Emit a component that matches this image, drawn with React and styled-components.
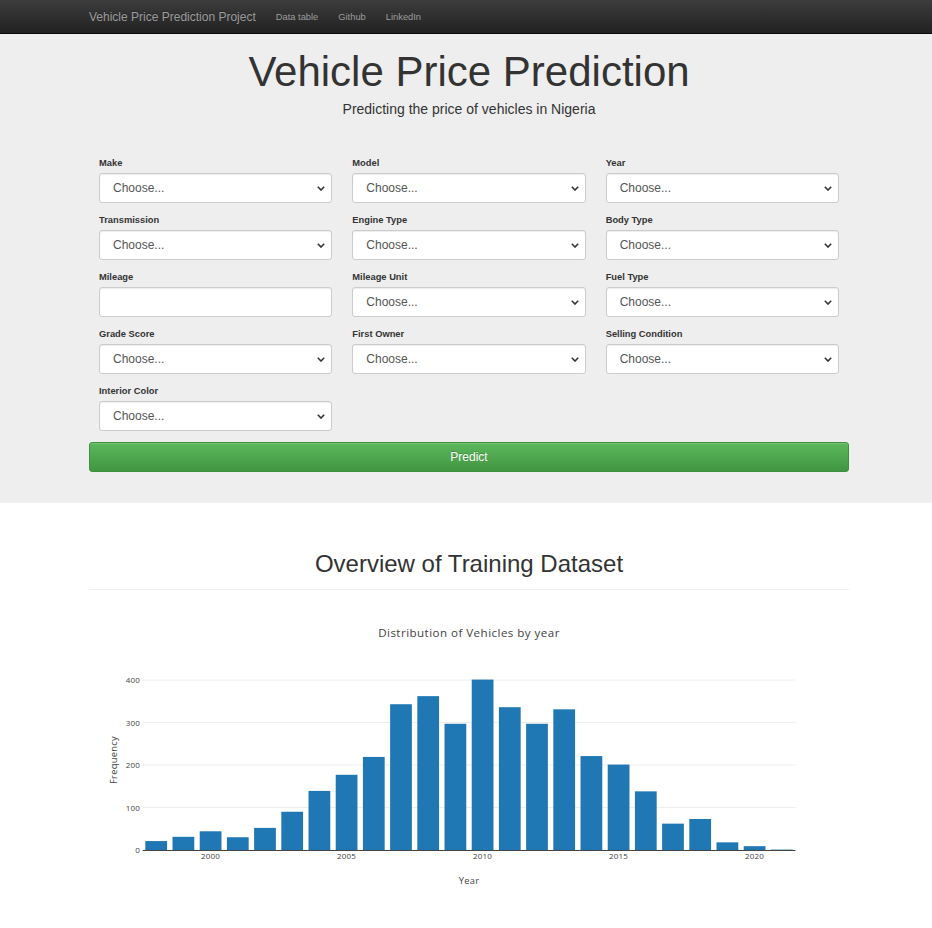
import React from "react";
import styled, { createGlobalStyle } from "styled-components";

const GlobalStyle = createGlobalStyle`
  html, body { margin: 0; padding: 0; background: #fff; }
  body {
    font-family: "Liberation Sans", Arial, Helvetica, sans-serif;
    color: #333;
  }
  * { box-sizing: border-box; }
`;

const Container = styled.div`
  width: 760px;
  margin-left: calc(50% - 377px);
`;

const Navbar = styled.nav`
  height: 34px;
  background: linear-gradient(to bottom, #3c3c3c 0%, #222 100%);
  border-bottom: 1px solid #080808;
`;

const NavInner = styled(Container)`
  display: flex;
  align-items: center;
  height: 33px;
`;

const Brand = styled.a`
  font-size: 12px;
  color: #9d9d9d;
  text-decoration: none;
  padding-right: 10px;
  text-shadow: 0 -1px 0 rgba(0, 0, 0, 0.25);
`;

const NavLink = styled.a`
  font-size: 9.33px;
  color: #9d9d9d;
  text-decoration: none;
  padding: 0 10px;
`;

const Jumbotron = styled.header`
  background: #eee;
  padding: 15px 0 31px;
`;

const Title = styled.h1`
  margin: 0;
  font-size: 42px;
  line-height: 46px;
  font-weight: 500;
  text-align: center;
  color: #333;
`;

const Lead = styled.p`
  margin: 3.5px 0 0;
  font-size: 14px;
  line-height: 20px;
  text-align: center;
`;

const FormGrid = styled.div`
  margin-top: 38.3px;
  display: grid;
  grid-template-columns: repeat(3, 1fr);
  column-gap: 20px;
  padding: 0 10px;
`;

const Field = styled.div`
  margin-bottom: 10.4px;
`;

const Label = styled.label`
  display: block;
  font-size: 9.33px;
  line-height: 13.3px;
  font-weight: 700;
  margin-bottom: 3.3px;
  color: #333;
`;

const SelectWrap = styled.div`
  position: relative;
`;

const controlStyles = `
  display: block;
  width: 100%;
  height: 30px;
  border: 1px solid #ccc;
  border-radius: 3px;
  background: #fff;
  box-shadow: inset 0 1px 1px rgba(0, 0, 0, 0.075);
  font-family: "Liberation Sans", Arial, sans-serif;
  font-size: 12px;
  color: #555;
  outline: none;
`;

const Select = styled.select`
  ${controlStyles}
  appearance: none;
  -webkit-appearance: none;
  padding: 0 24px 0 13px;
`;

const TextInput = styled.input`
  ${controlStyles}
  padding: 0 13px;
`;

const Chevron = styled.svg`
  position: absolute;
  right: 7px;
  top: 50%;
  margin-top: -2.5px;
  pointer-events: none;
`;

const PredictButton = styled.button`
  display: block;
  width: 100%;
  height: 30px;
  margin-top: 0.6px;
  border: 1px solid #3e8f3e;
  border-radius: 3px;
  background: linear-gradient(to bottom, #5cb85c 0%, #419641 100%);
  color: #fff;
  font-family: "Liberation Sans", Arial, sans-serif;
  font-size: 12px;
  text-shadow: 0 -1px 0 rgba(0, 0, 0, 0.2);
  box-shadow: inset 0 1px 0 rgba(255, 255, 255, 0.15);
`;

const SectionTitle = styled.h2`
  margin: 47.5px 0 0;
  font-size: 24px;
  line-height: 26px;
  font-weight: 500;
  text-align: center;
  color: #333;
`;

const Rule = styled.hr`
  margin: 12.5px 0 0;
  border: 0;
  border-top: 1px solid #eee;
`;

const ChartWrap = styled.div`
  margin-top: 13.5px;
  height: 300px;
  margin-bottom: 24px;
`;

const ChartSvg = styled.svg`
  display: block;
  font-family: "Open Sans", Verdana, Arial, sans-serif;
`;

const fields = [
  { label: "Make" },
  { label: "Model" },
  { label: "Year" },
  { label: "Transmission" },
  { label: "Engine Type" },
  { label: "Body Type" },
  { label: "Mileage", input: true },
  { label: "Mileage Unit" },
  { label: "Fuel Type" },
  { label: "Grade Score" },
  { label: "First Owner" },
  { label: "Selling Condition" },
  { label: "Interior Color" },
];

const data = [
  [1998, 21], [1999, 31], [2000, 44], [2001, 30], [2002, 52], [2003, 90],
  [2004, 139], [2005, 177], [2006, 219], [2007, 343], [2008, 362], [2009, 297],
  [2010, 401], [2011, 336], [2012, 297], [2013, 331], [2014, 221], [2015, 201],
  [2016, 138], [2017, 62], [2018, 73], [2019, 18], [2020, 9], [2021, 1],
];

const PL = 53.6;
const PR = 706.4;
const Y0 = 246;
const KX = 27.2;
const KY = 0.425;
const xOf = (yr) => PL + (yr - 1997.5) * KX;
const yOf = (v) => Y0 - v * KY;

function Chart() {
  return (
    <ChartSvg width="760" height="300" viewBox="0 0 760 300">
      <text x="380" y="32.5" textAnchor="middle" fontSize="11.6" letterSpacing="0.45" fill="#444">
        Distribution of Vehicles by year
      </text>
      {[100, 200, 300, 400].map((v) => (
        <line key={v} x1={PL} x2={PR} y1={yOf(v)} y2={yOf(v)} stroke="#eee" strokeWidth="1" />
      ))}
      {data.map(([yr, v]) => (
        <rect
          key={yr}
          x={xOf(yr) - KX * 0.4}
          width={KX * 0.8}
          y={yOf(v)}
          height={v * KY}
          fill="#1f77b4"
        />
      ))}
      <line x1={PL} x2={PR} y1={Y0 + 0.5} y2={Y0 + 0.5} stroke="#444" strokeWidth="1" />
      {[0, 100, 200, 300, 400].map((v) => (
        <text key={v} x={PL - 2.5} y={yOf(v) + 3} textAnchor="end" fontSize="8" letterSpacing="0.2" fill="#444">
          {v}
        </text>
      ))}
      {[2000, 2005, 2010, 2015, 2020].map((yr) => (
        <text key={yr} x={xOf(yr)} y="255.3" textAnchor="middle" fontSize="8" letterSpacing="0.2" fill="#444">
          {yr}
        </text>
      ))}
      <text x="380" y="279.5" textAnchor="middle" fontSize="9.33" letterSpacing="0.3" fill="#444">
        Year
      </text>
      <text
        x="28"
        y="156"
        textAnchor="middle"
        fontSize="9.33"
        letterSpacing="0.3"
        fill="#444"
        transform="rotate(-90, 28, 156)"
      >
        Frequency
      </text>
    </ChartSvg>
  );
}

function FormField({ label, input }) {
  return (
    <Field>
      <Label>{label}</Label>
      {input ? (
        <TextInput type="text" />
      ) : (
        <SelectWrap>
          <Select defaultValue="">
            <option value="">Choose...</option>
          </Select>
          <Chevron width="8" height="5" viewBox="0 0 8 5">
            <path d="M0.8 0.8 L4 4 L7.2 0.8" fill="none" stroke="#333" strokeWidth="1.6" />
          </Chevron>
        </SelectWrap>
      )}
    </Field>
  );
}

export default function App() {
  return (
    <>
      <GlobalStyle />
      <Navbar>
        <NavInner>
          <Brand href="#">Vehicle Price Prediction Project</Brand>
          <NavLink href="#">Data table</NavLink>
          <NavLink href="#">Github</NavLink>
          <NavLink href="#">LinkedIn</NavLink>
        </NavInner>
      </Navbar>
      <Jumbotron>
        <Container>
          <Title>Vehicle Price Prediction</Title>
          <Lead>Predicting the price of vehicles in Nigeria</Lead>
          <FormGrid>
            {fields.map((f) => (
              <FormField key={f.label} {...f} />
            ))}
          </FormGrid>
          <PredictButton type="button">Predict</PredictButton>
        </Container>
      </Jumbotron>
      <Container>
        <SectionTitle>Overview of Training Dataset</SectionTitle>
        <Rule />
        <ChartWrap>
          <Chart />
        </ChartWrap>
      </Container>
    </>
  );
}
